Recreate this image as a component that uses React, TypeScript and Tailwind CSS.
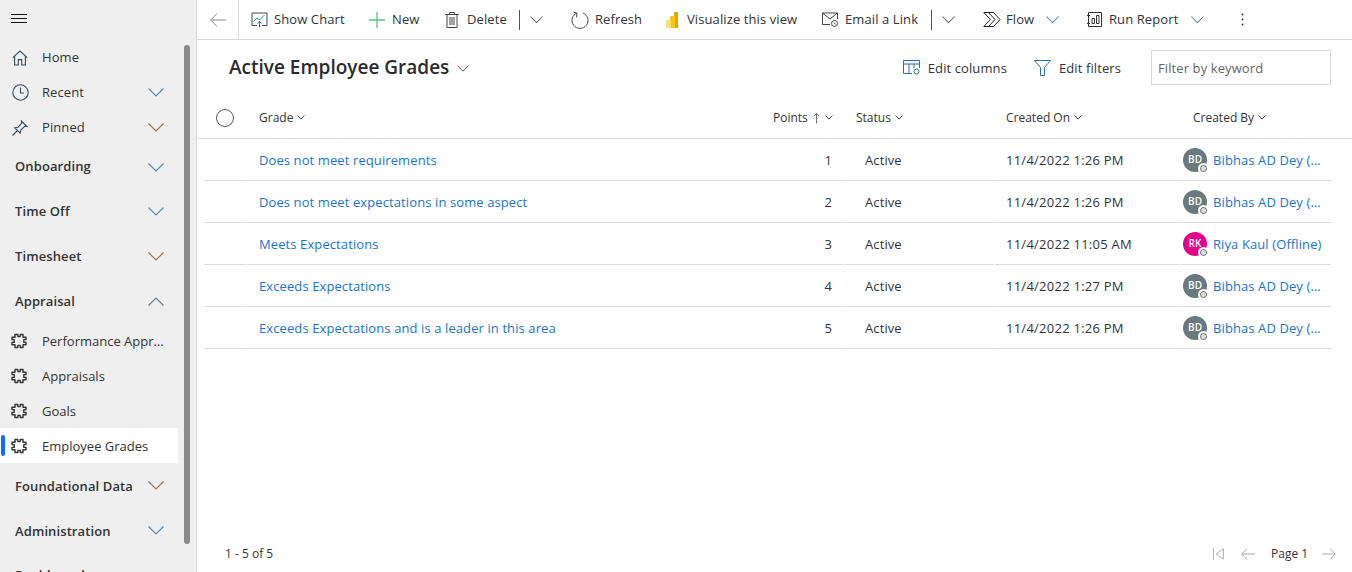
import type { ReactNode } from "react";

const Chevron = ({ up = false, w = 16, color = "#6f7c88" }: { up?: boolean; w?: number; color?: string }) => (
  <svg width={w} height={w / 2 + 1} viewBox="0 0 16 9" fill="none" className="shrink-0">
    <path d={up ? "M0.5 8.5 L8 1 L15.5 8.5" : "M0.5 0.5 L8 8 L15.5 0.5"} stroke={color} strokeWidth={w < 14 ? 1.3 : 1.1} />
  </svg>
);

const SmallChevron = () => (
  <svg width="8" height="5" viewBox="0 0 8 5" fill="none" className="shrink-0">
    <path d="M0.5 0.5 L4 4 L7.5 0.5" stroke="#444" strokeWidth="1" />
  </svg>
);

const Puzzle = () => (
  <svg width="16" height="16" viewBox="0 0 16 16" fill="none" stroke="#333" strokeWidth="1.4" strokeLinejoin="round" className="shrink-0">
    <path d="M4 1.5 H6.8 V3.6 H9.2 V1.5 H12 V4.2 H15 V6.6 H12.8 V9.4 H15 V11.8 H12 V14.5 H9.2 V12.4 H6.8 V14.5 H4 V11.8 H1 V9.4 H3.2 V6.6 H1 V4.2 H4 Z" />
  </svg>
);

const HomeIcon = () => (
  <svg width="16" height="16" viewBox="0 0 16 16" fill="none" stroke="#3a4a5a" strokeWidth="1.1" className="shrink-0">
    <path d="M0.8 7.6 L8 1 L15.2 7.6 M2.6 6.2 V15 H6.3 V9.6 H9.7 V15 H13.4 V6.2" />
  </svg>
);

const ClockIcon = () => (
  <svg width="17" height="17" viewBox="0 0 17 17" fill="none" stroke="#3a4a5a" strokeWidth="1.1" className="shrink-0">
    <circle cx="8.5" cy="8.5" r="7.7" />
    <path d="M8.5 3.5 V9 H12" />
  </svg>
);

const PinIcon = () => (
  <svg width="16" height="16" viewBox="0 0 16 16" fill="none" stroke="#3a4a5a" strokeWidth="1.1" className="shrink-0">
    <path d="M0.5 15.5 L5.5 10.5 M2.8 7.8 L6 7.2 L9.8 3 L9.5 1 L15 6.5 L13 6.2 L8.8 10 L8.2 13.2 Z" />
  </svg>
);

const topItems = [
  { label: "Home", icon: <HomeIcon />, color: "" },
  { label: "Recent", icon: <ClockIcon />, color: "#5a86b0" },
  { label: "Pinned", icon: <PinIcon />, color: "#8a7660" },
];

const SubRow = ({ label, active = false }: { label: string; active?: boolean }) => (
  <div className={`flex h-[35px] items-center ${active ? "bg-white" : ""}`}>
    <div className={`ml-px h-[21px] w-1 rounded-sm ${active ? "bg-[#0f6cff]" : ""}`} />
    <div className="ml-1.5">
      <Puzzle />
    </div>
    <span className="ml-[15px] w-[124px] truncate pt-[2px] tracking-normal">{label}</span>
  </div>
);

const GroupRow = ({
  label,
  h = "h-[45px]",
  up = false,
  low = false,
  color = "#5a86b0",
}: {
  label: string;
  h?: string;
  up?: boolean;
  low?: boolean;
  color?: string;
}) => (
  <div className={`flex ${h} items-center justify-between pl-[15px] pr-[14px]`}>
    <span className={`font-semibold ${low ? "pt-[2px]" : ""}`}>{label}</span>
    {label !== "Dashboards" && <Chevron up={up} color={color} />}
  </div>
);

function Sidebar() {
  return (
    <aside className="flex h-[572px] w-[197px] shrink-0 overflow-hidden border-r border-[#dcdcdc] bg-[#efefef] text-[#333]">
      <nav className="w-[178px] shrink-0">
        <div className="flex h-10 items-start pl-[11px] pt-[14px]">
          <svg width="16" height="10" viewBox="0 0 16 10" stroke="#111" strokeWidth="1">
            <path d="M0 0.5 H16 M0 4.5 H16 M0 8.5 H16" />
          </svg>
        </div>
        {topItems.map((item) => (
          <div key={item.label} className="flex h-[35px] items-center pl-3 pr-[14px]">
            <span className="flex w-[30px]">{item.icon}</span>
            <span className="flex-1">{item.label}</span>
            {item.color && <Chevron color={item.color} />}
          </div>
        ))}
        <GroupRow label="Onboarding" h="h-[44px]" />
        <GroupRow label="Time Off" />
        <GroupRow label="Timesheet" color="#8a7660" />
        <GroupRow label="Appraisal" h="h-[44px]" up low color="#6f7c88" />
        <SubRow label="Performance Appraisals" />
        <SubRow label="Appraisals" />
        <SubRow label="Goals" />
        <SubRow label="Employee Grades" active />
        <GroupRow label="Foundational Data" low color="#8a7660" />
        <GroupRow label="Administration" low />
        <GroupRow label="Dashboards" />
      </nav>
      <div className="ml-1.5 mt-[45px] h-[499px] w-1.5 rounded-full bg-[#8a8a8a]" />
    </aside>
  );
}

const ToolItem = ({ w, icon, label, iconW, chevron }: { w: string; icon: ReactNode; label: string; iconW: string; chevron?: ReactNode }) => (
  <div className={`flex h-full shrink-0 items-center ${w}`}>
    <span className={`flex shrink-0 ${iconW}`}>{icon}</span>
    <span className="whitespace-nowrap">{label}</span>
    {chevron}
  </div>
);

const Separator = () => <div className="h-5 w-px shrink-0 bg-[#555]" />;

function Toolbar() {
  return (
    <div className="flex h-10 shrink-0 items-center border-b border-[#d8d8d8] text-[#333]">
      <div className="flex h-full w-[42px] shrink-0 items-center justify-center border-r border-[#d8d8d8]">
        <svg width="16" height="14" viewBox="0 0 16 14" fill="none" stroke="#8a8a8a" strokeWidth="1">
          <path d="M7 0.5 L0.8 7 L7 13.5 M0.8 7 H16" />
        </svg>
      </div>
      <div className="w-3 shrink-0" />
      <ToolItem
        w="w-[118px]"
        iconW="w-[23px]"
        label="Show Chart"
        icon={
          <svg width="17" height="16" viewBox="0 0 17 16" fill="none">
            <path d="M6 13.5 H1 V1 H16 V13.5 H11" stroke="#444" />
            <path d="M2.5 9.5 L6 6 L8.5 8 L13.5 3" stroke="#2f9e6e" />
            <path d="M8.5 15.5 V9.5 M6.5 11.5 L8.5 9.5 L10.5 11.5" stroke="#1f6fc0" />
          </svg>
        }
      />
      <ToolItem
        w="w-[76px]"
        iconW="w-[23px]"
        label="New"
        icon={
          <svg width="16" height="16" viewBox="0 0 16 16" stroke="#5cbf8c" strokeWidth="1.3">
            <path d="M8 0 V16 M0 8 H16" />
          </svg>
        }
      />
      <ToolItem
        w="w-[74px]"
        iconW="w-[22px]"
        label="Delete"
        icon={
          <svg width="14" height="16" viewBox="0 0 14 16" fill="none" stroke="#444">
            <path d="M0 2.5 H14 M4.5 2.5 V0.5 H9.5 V2.5 M2 2.5 V15.5 H12 V2.5 M5 5 V13 M7 5 V13 M9 5 V13" />
          </svg>
        }
      />
      <Separator />
      <div className="ml-[10px] flex w-[41px] shrink-0">
        <Chevron w={13} color="#666" />
      </div>
      <ToolItem
        w="w-[95px]"
        iconW="w-[24px]"
        label="Refresh"
        icon={
          <svg width="18" height="18" viewBox="0 0 18 18" fill="none" stroke="#444">
            <path d="M6 2 A8 8 0 1 0 12 2 M6 2.2 L5.5 6.2 M6 2.2 L2.4 1" />
          </svg>
        }
      />
      <ToolItem
        w="w-[156px]"
        iconW="w-[21px]"
        label="Visualize this view"
        icon={
          <svg width="12" height="16" viewBox="0 0 12 16">
            <rect x="8" y="0" width="4" height="16" rx="1" fill="#e3a30f" />
            <rect x="4" y="4" width="5" height="12" rx="1" fill="#f2c811" />
            <rect x="0" y="8" width="5" height="8" rx="1" fill="#f8e16f" />
          </svg>
        }
      />
      <ToolItem
        w="w-[109px]"
        iconW="w-[23px]"
        label="Email a Link"
        icon={
          <svg width="17" height="15" viewBox="0 0 17 15" fill="none" stroke="#444">
            <path d="M8 12.5 H0.5 V1 H15.5 V7 M0.5 1 L8 7 L15.5 1" />
            <circle cx="12.5" cy="11.5" r="3" />
            <path d="M12 10.5 L13.5 12.5" />
          </svg>
        }
      />
      <Separator />
      <div className="ml-[10px] flex w-[41px] shrink-0">
        <Chevron w={13} color="#666" />
      </div>
      <ToolItem
        w="w-[104px]"
        iconW="w-[23px]"
        label="Flow"
        chevron={
          <span className="ml-3">
            <Chevron w={13} color="#5a86b0" />
          </span>
        }
        icon={
          <svg width="18" height="15" viewBox="0 0 18 15" fill="none" stroke="#222" strokeWidth="1">
            <path d="M0.8 0.5 H10.5 L17 7.5 L10.5 14.5 H0.8 L7.3 7.5 Z M5.5 0.5 L12 7.5 L5.5 14.5" />
          </svg>
        }
      />
      <ToolItem
        w="w-[154px]"
        iconW="w-[22px]"
        label="Run Report"
        chevron={
          <span className="ml-[13px]">
            <Chevron w={13} color="#6f7c88" />
          </span>
        }
        icon={
          <svg width="15" height="16" viewBox="0 0 15 16" fill="none" stroke="#333">
            <path d="M1.5 0.5 H14.5 V14.5 H1.5 Z M0 3.5 H3 M0 11.5 H3 M5 11.5 V6.5 H7.5 V11.5 Z M9.5 11.5 V3.5 H12 V11.5 Z" />
          </svg>
        }
      />
      <svg width="3" height="13" viewBox="0 0 3 13" fill="#333">
        <circle cx="1.5" cy="1.5" r="1" />
        <circle cx="1.5" cy="6.5" r="1" />
        <circle cx="1.5" cy="11.5" r="1" />
      </svg>
    </div>
  );
}

const rows = [
  { grade: "Does not meet requirements", points: 1, on: "11/4/2022 1:26 PM", by: "Bibhas AD Dey (Offline)", init: "BD", bg: "bg-[#69797e]" },
  { grade: "Does not meet expectations in some aspect", points: 2, on: "11/4/2022 1:26 PM", by: "Bibhas AD Dey (Offline)", init: "BD", bg: "bg-[#69797e]" },
  { grade: "Meets Expectations", points: 3, on: "11/4/2022 11:05 AM", by: "Riya Kaul (Offline)", init: "RK", bg: "bg-[#e3008c]" },
  { grade: "Exceeds Expectations", points: 4, on: "11/4/2022 1:27 PM", by: "Bibhas AD Dey (Offline)", init: "BD", bg: "bg-[#69797e]" },
  { grade: "Exceeds Expectations and is a leader in this area", points: 5, on: "11/4/2022 1:26 PM", by: "Bibhas AD Dey (Offline)", init: "BD", bg: "bg-[#69797e]" },
];

const Avatar = ({ init, bg }: { init: string; bg: string }) => (
  <div className={`relative flex h-6 w-6 shrink-0 items-center justify-center rounded-full text-[10px] font-semibold text-white ${bg}`}>
    {init}
    <span className="absolute -bottom-0.5 -right-0.5 h-[11px] w-[11px] rounded-full border-2 border-white bg-[#dcdcdc] ring-1 ring-inset ring-[#777]" />
  </div>
);

function Grid() {
  return (
    <div>
      <div className="flex h-[42px] items-center border-b border-[#dcdcdc] text-xs font-medium tracking-normal text-[#333]">
        <div className="flex w-[50px] shrink-0 justify-end pr-[13px]">
          <span className="h-[18px] w-[18px] rounded-full border border-[#555]" />
        </div>
        <div className="ml-3 flex w-[514px] shrink-0 items-center gap-1">
          Grade <SmallChevron />
        </div>
        <div className="flex w-[60px] shrink-0 items-center justify-end whitespace-nowrap">
          Points
          <svg width="8" height="12" viewBox="0 0 8 12" fill="none" stroke="#555" className="mx-[5px]">
            <path d="M4 12 V1 M1 4 L4 1 L7 4" />
          </svg>
          <SmallChevron />
        </div>
        <div className="ml-[23px] flex w-[150px] shrink-0 items-center gap-1">
          Status <SmallChevron />
        </div>
        <div className="flex w-[187px] shrink-0 items-center gap-1">
          Created On <SmallChevron />
        </div>
        <div className="flex items-center gap-1">
          Created By <SmallChevron />
        </div>
      </div>
      {rows.map((r) => (
        <div key={r.points} className="flex h-[42px] pl-[7px] text-[#333]">
          <div className="mr-px w-[42px] shrink-0 border-b border-[#dcdcdc]" />
          <div className="mr-px flex w-[596px] shrink-0 items-center justify-between border-b border-[#dcdcdc] pl-3 pr-[11px]">
            <span className="pt-[2px] text-[#1a75c9]">{r.grade}</span>
            <span className="pt-[2px]">{r.points}</span>
          </div>
          <div className="mr-px flex w-[150px] shrink-0 items-center border-b border-[#dcdcdc] pl-[21px]">
            <span className="pt-[2px]">Active</span>
          </div>
          <div className="mr-px flex w-[185px] shrink-0 items-center border-b border-[#dcdcdc] pl-[11px]">
            <span className="pt-[2px] tracking-[0.25px]">{r.on}</span>
          </div>
          <div className="flex w-[150px] shrink-0 items-center gap-1.5 border-b border-[#dcdcdc] pl-[2px] pr-[9px]">
            <Avatar init={r.init} bg={r.bg} />
            <span className="truncate pt-[2px] text-[#1a75c9]">{r.by}</span>
          </div>
        </div>
      ))}
    </div>
  );
}

function Main() {
  return (
    <main className="flex h-[572px] min-w-0 flex-1 flex-col overflow-hidden bg-white">
      <Toolbar />
      <div className="flex h-[57px] shrink-0 items-center pb-[2px] pl-8 pr-[21px] text-[#333]">
        <h1 className="text-[19px] font-semibold tracking-normal text-[#2b2b2b]">Active Employee Grades</h1>
        <div className="ml-2 mt-0.5">
          <Chevron w={12} color="#555" />
        </div>
        <div className="flex-1" />
        <svg width="17" height="15" viewBox="0 0 17 15" fill="none" stroke="#2b6ea8">
          <path d="M9 13.5 H0.5 V0.5 H16.5 V8 M0.5 4 H16.5 M6 4 V13.5 M11 4 V8" />
          <circle cx="13.5" cy="11.5" r="2.5" />
        </svg>
        <span className="ml-2 pt-[2px]">Edit columns</span>
        <svg width="17" height="16" viewBox="0 0 17 16" fill="none" stroke="#2b6ea8" className="ml-[27px]">
          <path d="M0.5 0.5 H16.5 L10.5 7.5 V15.5 H6.5 V7.5 Z" />
        </svg>
        <span className="ml-2 pt-[2px]">Edit filters</span>
        <input
          placeholder="Filter by keyword"
          className="ml-[30px] h-[35px] w-[180px] border border-[#d8d8d8] px-1.5 placeholder:text-[#666] focus:outline-none"
        />
      </div>
      <Grid />
      <div className="flex-1" />
      <div className="flex h-[37px] shrink-0 items-center pl-7 pr-4 pt-px text-xs tracking-normal text-[#333]">
        <span>1 - 5 of 5</span>
        <div className="flex-1" />
        <svg width="11" height="12" viewBox="0 0 11 12" fill="none" stroke="#b5b5b5">
          <path d="M0.5 0 V12 M10.5 0.8 V11.2 L3 6 Z" />
        </svg>
        <svg width="14" height="12" viewBox="0 0 14 12" fill="none" stroke="#a8a8a8" className="ml-[17px]">
          <path d="M6 0.5 L0.8 6 L6 11.5 M0.8 6 H14" />
        </svg>
        <span className="ml-4 w-[51px]">Page 1</span>
        <svg width="14" height="12" viewBox="0 0 14 12" fill="none" stroke="#a8a8a8">
          <path d="M8 0.5 L13.2 6 L8 11.5 M13.2 6 H0" />
        </svg>
      </div>
    </main>
  );
}

export default function App() {
  return (
    <div className="flex h-[572px] w-[1352px] overflow-hidden bg-white font-['Open_Sans',sans-serif] text-[13px] tracking-[0.1px]">
      <Sidebar />
      <Main />
    </div>
  );
}
